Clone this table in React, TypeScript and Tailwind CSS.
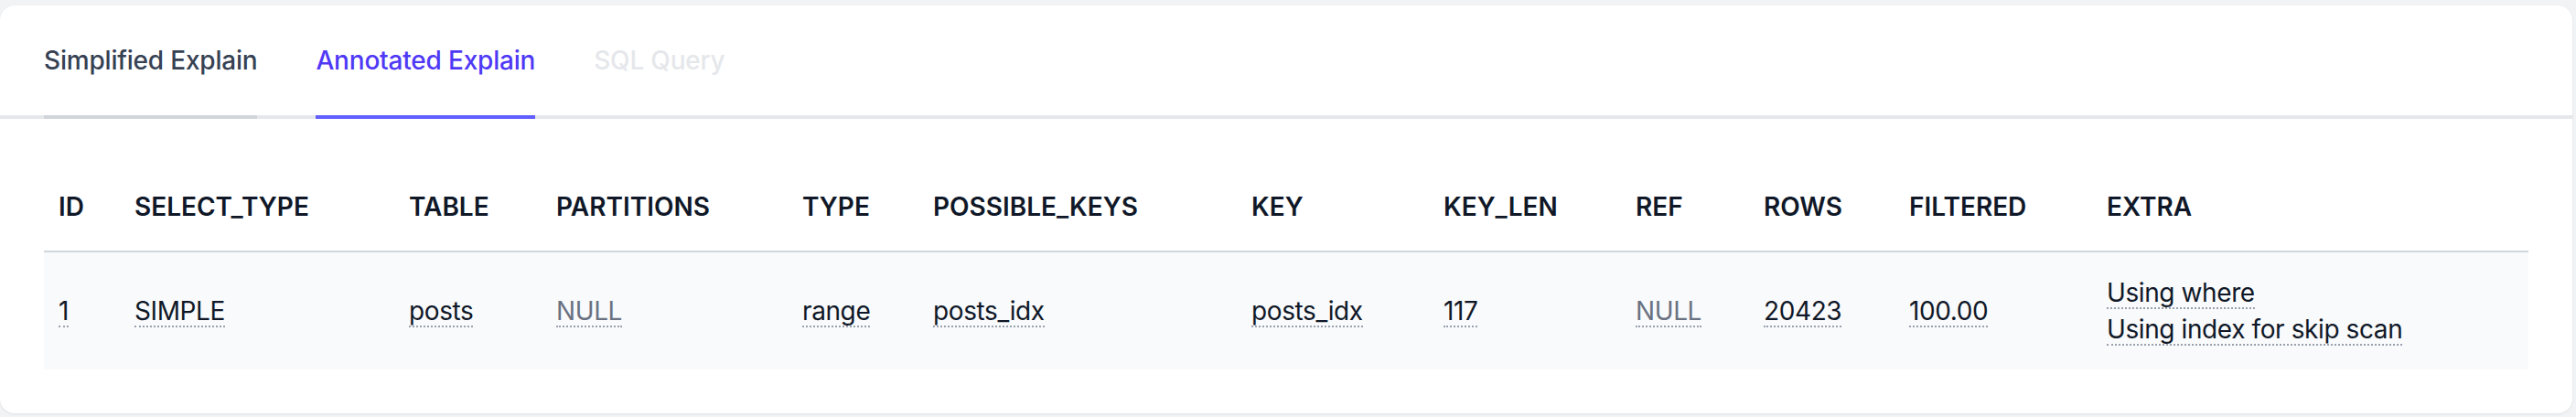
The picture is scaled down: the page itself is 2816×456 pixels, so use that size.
import React from "react";

const cols = [83, 300, 161, 269, 143, 348, 210, 210, 140, 159, 216, 477];
const headers = [
  "ID",
  "SELECT_TYPE",
  "TABLE",
  "PARTITIONS",
  "TYPE",
  "POSSIBLE_KEYS",
  "KEY",
  "KEY_LEN",
  "REF",
  "ROWS",
  "FILTERED",
  "EXTRA",
];

type Cell = { v: string; muted?: boolean };
const row: Cell[] = [
  { v: "1" },
  { v: "SIMPLE" },
  { v: "posts" },
  { v: "NULL", muted: true },
  { v: "range" },
  { v: "posts_idx" },
  { v: "posts_idx" },
  { v: "117" },
  { v: "NULL", muted: true },
  { v: "20423" },
  { v: "100.00" },
];

function Dotted({ children, muted }: { children: React.ReactNode; muted?: boolean }) {
  return (
    <span
      className={
        "inline-block leading-[32px] border-b-2 border-dotted border-gray-400 " +
        (muted ? "text-gray-500" : "text-gray-900")
      }
    >
      {children}
    </span>
  );
}

export default function App() {
  return (
    <div
      className="w-[2816px] h-[456px] bg-[#f2f3f5] pt-[6px] pr-[4px]"
      style={{ fontFamily: "Inter, 'Noto Sans', sans-serif" }}
    >
      <div className="h-[446px] bg-white rounded-[16px] shadow-[0_1px_3px_rgba(0,0,0,0.08)] flex flex-col">
        <nav className="flex gap-[64px] px-[48px] border-b-4 border-gray-200">
          <div className="pt-[40px] pb-[40px] -mb-[4px] border-b-4 border-gray-300 text-[28px] leading-[40px] font-medium text-gray-700 tracking-[-0.2px]">
            Simplified Explain
          </div>
          <div className="pt-[40px] pb-[40px] -mb-[4px] border-b-4 border-indigo-500 text-[28px] leading-[40px] font-medium text-indigo-600 tracking-[-0.2px]">
            Annotated Explain
          </div>
          <div className="pt-[40px] pb-[40px] -mb-[4px] border-b-4 border-transparent text-[28px] leading-[40px] font-medium text-gray-200 tracking-[-0.2px]">
            SQL Query
          </div>
        </nav>
        <div className="p-[48px]">
          <table className="w-full table-fixed border-collapse">
            <colgroup>
              {cols.map((w, i) => (
                <col key={i} style={{ width: w }} />
              ))}
            </colgroup>
            <thead>
              <tr className="border-b-2 border-gray-300">
                {headers.map((h) => (
                  <th
                    key={h}
                    className="px-[16px] py-[28px] text-left text-[28px] leading-[40px] font-semibold text-gray-900 whitespace-nowrap"
                  >
                    {h}
                  </th>
                ))}
              </tr>
            </thead>
            <tbody>
              <tr className="bg-gray-50">
                {row.map((c, i) => (
                  <td
                    key={i}
                    className="px-[16px] py-[24px] align-middle text-[28px] leading-[40px] tracking-[-0.4px] whitespace-nowrap"
                  >
                    <Dotted muted={c.muted}>{c.v}</Dotted>
                  </td>
                ))}
                <td className="px-[16px] py-[24px] align-middle text-[28px] leading-[40px] tracking-[-0.4px] whitespace-nowrap">
                  <div className="flex flex-col items-start">
                    <div className="h-[40px]">
                      <Dotted>Using where</Dotted>
                    </div>
                    <div className="h-[40px]">
                      <Dotted>Using index for skip scan</Dotted>
                    </div>
                  </div>
                </td>
              </tr>
            </tbody>
          </table>
        </div>
      </div>
    </div>
  );
}
